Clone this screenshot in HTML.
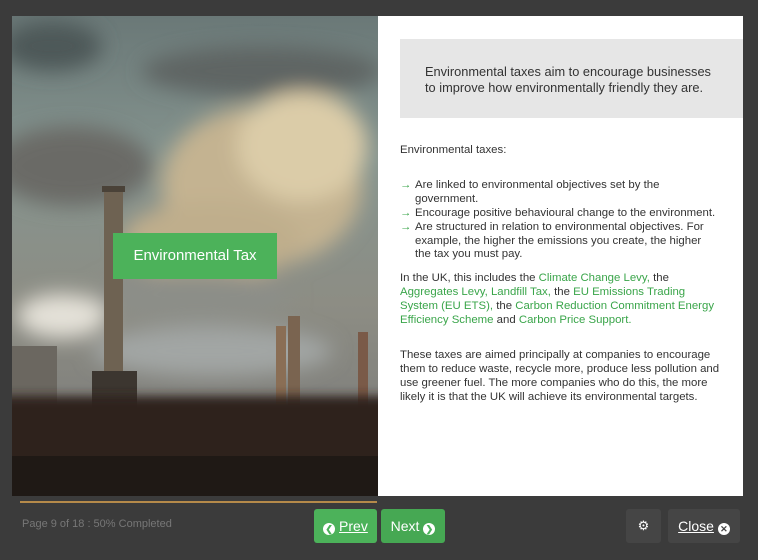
<!DOCTYPE html>
<html><head><meta charset="utf-8"><style>
*{margin:0;padding:0;box-sizing:border-box}
body{width:758px;height:560px;background:#3b3b3b;position:relative;overflow:hidden;font-family:"Liberation Sans",sans-serif}
#img{position:absolute;left:12px;top:16px;width:366px;height:480px}
#panel{position:absolute;left:378px;top:16px;width:365px;height:480px;background:#fff}
#quote{position:absolute;left:22px;top:23px;width:343px;height:79px;background:#e6e6e6;color:#333;font-size:12.8px;line-height:16px;padding:25px 0 0 25px}
#body{position:absolute;left:22px;top:128px;width:320px;color:#333;font-size:11.4px;line-height:13.9px}
.g{color:#3aa54a}
ul{list-style:none;margin:21px 0 10px}
li{padding-left:15px;position:relative}
li:before{content:"\2192";position:absolute;left:0;color:#3aa54a;font-weight:bold}
#label{position:absolute;left:113px;top:233px;width:164px;height:46px;background:#4cb25a;color:#fff;font-size:15px;line-height:46px;text-align:center}
.btn{position:absolute;top:509px;height:34px;border-radius:3px;font-size:14px;line-height:34px;text-align:center;color:#fff}
.ci{display:inline-block;width:12px;height:12px;border-radius:50%;background:#fff;color:#4cb25a;font-size:9px;line-height:12px;font-weight:bold;vertical-align:-1px}
</style></head><body>
<svg id="img" viewBox="0 0 366 480">
<defs>
<linearGradient id="sky" x1="0" y1="0" x2="0" y2="1"><stop offset="0" stop-color="#6a7877"/><stop offset=".3" stop-color="#85948f"/><stop offset=".6" stop-color="#8d8d84"/><stop offset="1" stop-color="#777"/></linearGradient>
<filter id="b"><feGaussianBlur stdDeviation="10"/></filter>
<filter id="b2"><feGaussianBlur stdDeviation="5"/></filter>
</defs>
<rect width="366" height="480" fill="url(#sky)"/>
<g filter="url(#b)">
<ellipse cx="40" cy="30" rx="50" ry="25" fill="#4e5858"/>
<ellipse cx="250" cy="55" rx="120" ry="25" fill="#5f6564"/>
<ellipse cx="60" cy="150" rx="80" ry="40" fill="#6a6b66"/>
<ellipse cx="250" cy="170" rx="100" ry="80" fill="#c4b391"/>
<ellipse cx="290" cy="130" rx="65" ry="55" fill="#dbcca8"/>
<ellipse cx="200" cy="225" rx="90" ry="40" fill="#bfae8c"/>
<ellipse cx="180" cy="280" rx="100" ry="25" fill="#8c8e88"/>
<ellipse cx="50" cy="300" rx="45" ry="22" fill="#e4e1d8"/>
<ellipse cx="200" cy="335" rx="120" ry="25" fill="#a2a6a4"/>
</g>
<rect x="92" y="172" width="19" height="200" fill="#6e6252"/>
<rect x="90" y="170" width="23" height="6" fill="#4a4238"/>
<rect x="264" y="310" width="10" height="80" fill="#8a6e55"/>
<rect x="276" y="300" width="12" height="90" fill="#7a6450"/>
<rect x="346" y="316" width="10" height="90" fill="#7a5a48"/>
<rect x="0" y="330" width="45" height="60" fill="#6b6760"/>
<rect x="80" y="355" width="45" height="40" fill="#3c3630"/>
<rect x="-20" y="380" width="406" height="120" fill="#2d241e" filter="url(#b2)"/>
<rect x="0" y="440" width="366" height="40" fill="#1f1915"/>
</svg>
<div id="label">Environmental Tax</div>
<div id="panel">
<div id="quote">Environmental taxes aim to encourage businesses<br>to improve how environmentally friendly they are.</div>
<div id="body">
<p>Environmental taxes:</p>
<ul>
<li>Are linked to environmental objectives set by the government.</li>
<li>Encourage positive behavioural change to the environment.</li>
<li>Are structured in relation to environmental objectives. For example, the higher the emissions you create, the higher the tax you must pay.</li>
</ul>
<p>In the UK, this includes the <span class="g">Climate Change Levy,</span> the <span class="g">Aggregates Levy, Landfill Tax,</span> the <span class="g">EU Emissions Trading System (EU ETS),</span> the <span class="g">Carbon Reduction Commitment Energy Efficiency Scheme</span> and <span class="g">Carbon Price Support.</span></p>
<p style="margin-top:21px">These taxes are aimed principally at companies to encourage them to reduce waste, recycle more, produce less pollution and use greener fuel. The more companies who do this, the more likely it is that the UK will achieve its environmental targets.</p>
</div>
</div>
<div style="position:absolute;left:20px;top:501px;width:357px;height:2px;background:#b58a4a"></div>
<div style="position:absolute;left:22px;top:518px;color:#777;font-size:11px">Page 9 of 18 : 50% Completed</div>
<div class="btn" style="left:314px;width:63px;background:#4cb25a"><span class="ci">&#10094;</span> <u>Prev</u></div>
<div class="btn" style="left:381px;width:64px;background:#46a853">Next <span class="ci">&#10095;</span></div>
<div class="btn" style="left:626px;width:35px;background:#454545;font-size:13px">&#9881;</div>
<div class="btn" style="left:668px;width:72px;background:#454545"><u>Close</u> <span class="ci" style="color:#454545">&#10005;</span></div>
</body></html>
